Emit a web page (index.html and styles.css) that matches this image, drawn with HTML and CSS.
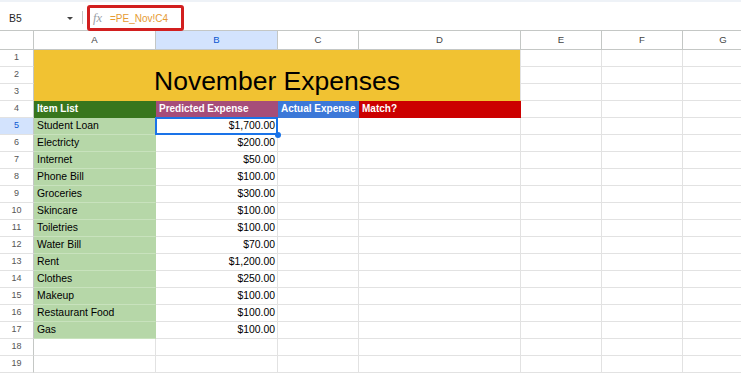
FILE: index.html
```html
<!DOCTYPE html>
<html lang="en">
<head>
    <meta charset="UTF-8">
    <meta name="viewport" content="width=device-width, initial-scale=1.0">
    <title>November Expenses</title>
    <link rel="stylesheet" href="styles.css">
</head>
<body>
    <!-- Formula bar -->
    <div class="toolbar">
        <div class="name-box"><span>B5</span><span class="caret"></span></div>
        <div class="divider"></div>
        <div class="formula">
            <span class="fx">fx</span>
            <span class="expr">=PE_Nov!C4</span>
        </div>
    </div>

    <!-- Sheet grid -->
    <div class="sheet">
        <div class="c ch corner"></div><div class="c ch">A</div><div class="c ch sel-h">B</div><div class="c ch">C</div><div class="c ch">D</div><div class="c ch">E</div><div class="c ch">F</div><div class="c ch">G</div>

        <div class="c rh">1</div><div class="c title">November Expenses</div><div class="c"></div><div class="c"></div><div class="c"></div>
        <div class="c rh">2</div><div class="c"></div><div class="c"></div><div class="c"></div>
        <div class="c rh">3</div><div class="c"></div><div class="c"></div><div class="c"></div>

        <div class="c rh">4</div><div class="c head h-item">Item List</div><div class="c head h-pred">Predicted Expense</div><div class="c head h-act">Actual Expense</div><div class="c head h-match">Match?</div><div class="c"></div><div class="c"></div><div class="c"></div>

        <div class="c rh sel-h">5</div><div class="c item">Student Loan</div><div class="c num active">$1,700.00</div><div class="c"></div><div class="c"></div><div class="c"></div><div class="c"></div><div class="c"></div>
        <div class="c rh">6</div><div class="c item">Electricty</div><div class="c num">$200.00</div><div class="c"></div><div class="c"></div><div class="c"></div><div class="c"></div><div class="c"></div>
        <div class="c rh">7</div><div class="c item">Internet</div><div class="c num">$50.00</div><div class="c"></div><div class="c"></div><div class="c"></div><div class="c"></div><div class="c"></div>
        <div class="c rh">8</div><div class="c item">Phone Bill</div><div class="c num">$100.00</div><div class="c"></div><div class="c"></div><div class="c"></div><div class="c"></div><div class="c"></div>
        <div class="c rh">9</div><div class="c item">Groceries</div><div class="c num">$300.00</div><div class="c"></div><div class="c"></div><div class="c"></div><div class="c"></div><div class="c"></div>
        <div class="c rh">10</div><div class="c item">Skincare</div><div class="c num">$100.00</div><div class="c"></div><div class="c"></div><div class="c"></div><div class="c"></div><div class="c"></div>
        <div class="c rh">11</div><div class="c item">Toiletries</div><div class="c num">$100.00</div><div class="c"></div><div class="c"></div><div class="c"></div><div class="c"></div><div class="c"></div>
        <div class="c rh">12</div><div class="c item">Water Bill</div><div class="c num">$70.00</div><div class="c"></div><div class="c"></div><div class="c"></div><div class="c"></div><div class="c"></div>
        <div class="c rh">13</div><div class="c item">Rent</div><div class="c num">$1,200.00</div><div class="c"></div><div class="c"></div><div class="c"></div><div class="c"></div><div class="c"></div>
        <div class="c rh">14</div><div class="c item">Clothes</div><div class="c num">$250.00</div><div class="c"></div><div class="c"></div><div class="c"></div><div class="c"></div><div class="c"></div>
        <div class="c rh">15</div><div class="c item">Makeup</div><div class="c num">$100.00</div><div class="c"></div><div class="c"></div><div class="c"></div><div class="c"></div><div class="c"></div>
        <div class="c rh">16</div><div class="c item">Restaurant Food</div><div class="c num">$100.00</div><div class="c"></div><div class="c"></div><div class="c"></div><div class="c"></div><div class="c"></div>
        <div class="c rh">17</div><div class="c item">Gas</div><div class="c num">$100.00</div><div class="c"></div><div class="c"></div><div class="c"></div><div class="c"></div><div class="c"></div>
        <div class="c rh">18</div><div class="c"></div><div class="c"></div><div class="c"></div><div class="c"></div><div class="c"></div><div class="c"></div><div class="c"></div>
        <div class="c rh">19</div><div class="c"></div><div class="c"></div><div class="c"></div><div class="c"></div><div class="c"></div><div class="c"></div><div class="c"></div>
    </div>
</body>
</html>
```

FILE: styles.css
```css
/* Base */
body {
    margin: 0;
    font-family: 'Liberation Sans', Arial, sans-serif;
    background: #fff;
    color: #000;
    overflow: hidden;
}

/* Formula bar */
.toolbar {
    height: 30px;
    box-sizing: border-box;
    border-top: 2px solid #eef2f7;
    display: flex;
    align-items: center;
    padding-left: 9px;
}

.name-box {
    width: 64px;
    padding-top: 4px;
    display: flex;
    justify-content: space-between;
    align-items: center;
    font-size: 10.4px;
    color: #1f1f1f;
}

.caret {
    width: 0;
    height: 0;
    border-left: 3px solid transparent;
    border-right: 3px solid transparent;
    border-top: 3px solid #444;
}

.divider {
    width: 1px;
    height: 13px;
    margin-left: 9px;
    margin-top: 3px;
    background: #c7c7c7;
}

.formula {
    width: 97px;
    height: 26px;
    box-sizing: border-box;
    margin-left: 4px;
    margin-top: 4px;
    border: 3px solid #d21f1f;
    border-radius: 3px;
    display: flex;
    align-items: center;
    padding-left: 3px;
    gap: 8px;
}

.fx {
    font-family: 'Liberation Serif', serif;
    font-style: italic;
    font-size: 12.5px;
    color: #9aa0a6;
}

.expr {
    font-size: 10px;
    color: #e69b33;
}

/* Grid */
.sheet {
    display: grid;
    grid-template-columns: 34px 122px 122px 81px 162px 81px 81px 81px;
    grid-template-rows: 19px;
    grid-auto-rows: 17px;
    border-top: 1px solid #c4c7c5;
}

.c {
    box-sizing: border-box;
    border-right: 1px solid #e2e2e2;
    border-bottom: 1px solid #e2e2e2;
    padding: 0 3px;
    font-size: 10.4px;
    line-height: 16px;
    white-space: nowrap;
    overflow: hidden;
}

.ch {
    border-right-color: #c4c7c5;
    border-bottom-color: #c4c7c5;
    text-align: center;
    font-size: 9.6px;
    line-height: 18px;
    color: #444;
}

.rh {
    border-right-color: #c4c7c5;
    padding: 0;
    text-align: center;
    font-size: 9px;
    line-height: 15px;
    color: #555;
}

.sel-h {
    background: #d3e3fd;
    color: #0b57d0;
}

/* Title */
.title {
    grid-column: span 4;
    grid-row: span 3;
    display: flex;
    justify-content: center;
    align-items: flex-end;
    padding-bottom: 3px;
    background: #f1c232;
    border-bottom-color: #f1c232;
    font-size: 26.5px;
    line-height: normal;
    color: #000;
}

/* Header row */
.head {
    color: #fff;
    font-weight: bold;
    font-size: 10px;
    border-color: transparent;
}

.h-item { background: #38761d; }
.h-pred { background: #a64d79; }
.h-act { background: #3c78d8; }
.h-match { background: #cc0000; }

.item {
    background: #b6d7a8;
    border-bottom-color: #c8e2bd;
    border-right-color: #b6d7a8;
}

.num {
    text-align: right;
    padding-right: 2px;
}

/* Selected cell */
.active {
    position: relative;
    overflow: visible;
    z-index: 1;
}

.active::after {
    content: '';
    position: absolute;
    inset: -1px;
    border: 2px solid #1a73e8;
}

.active::before {
    content: '';
    position: absolute;
    right: -4px;
    bottom: -4px;
    width: 6px;
    height: 6px;
    border-radius: 50%;
    background: #1a73e8;
    z-index: 2;
}
```
